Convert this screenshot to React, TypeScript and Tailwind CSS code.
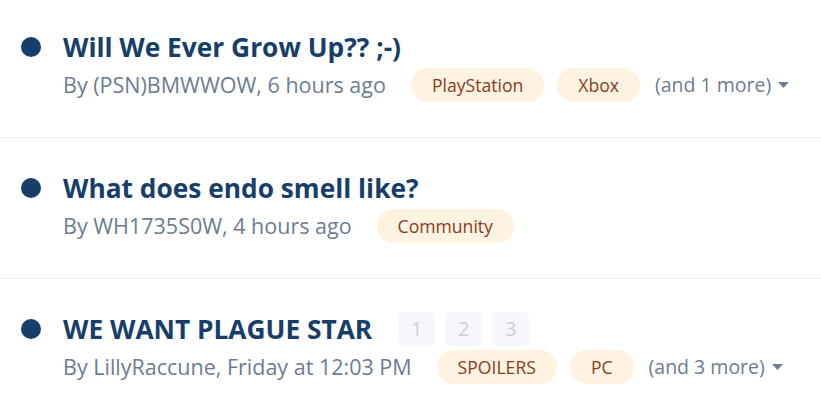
interface Thread {
  title: string;
  author: string;
  time: string;
  tags: string[];
  more?: number;
  pages?: number[];
}

const threads: Thread[] = [
  { title: "Will We Ever Grow Up?? ;-)", author: "(PSN)BMWWOW", time: "6 hours ago", tags: ["PlayStation", "Xbox"], more: 1 },
  { title: "What does endo smell like?", author: "WH1735S0W", time: "4 hours ago", tags: ["Community"] },
  { title: "WE WANT PLAGUE STAR", author: "LillyRaccune", time: "Friday at 12:03 PM", tags: ["SPOILERS", "PC"], more: 3, pages: [1, 2, 3] },
];

const Caret = () => (
  <svg width="13" height="8" viewBox="0 0 13 8" className="ml-[6px]">
    <path d="M1 1h11l-5.5 6z" fill="#6f7c8f" />
  </svg>
);

const ThreadRow = ({ t, last }: { t: Thread; last: boolean }) => (
  <div className={`flex h-[141px] pl-[21px] pt-[33px] ${last ? "" : "border-b border-[#ececec]"}`}>
    <div className="w-[20px] h-[20px] rounded-full bg-[#173e6a] mt-[7px] shrink-0" />
    <div className="ml-[22px] flex flex-col">
      <div className="flex items-center h-[34px]">
        <span className="text-[26.3px] font-bold text-[#173e6a] leading-[34px]">{t.title}</span>
        {t.pages && (
          <div className="flex gap-[10px] ml-[26px]">
            {t.pages.map((p) => (
              <span key={p} className="w-[37px] h-[34px] rounded-[6px] bg-[#f5f7fa] text-[#cbd2da] text-[20px] flex items-center justify-center">
                {p}
              </span>
            ))}
          </div>
        )}
      </div>
      <div className="flex items-center h-[34px] mt-[4px] text-[21.5px] text-[#6f7c8f]">
        <span>By {t.author}, {t.time}</span>
        <div className="flex gap-[13px] ml-[25px]">
          {t.tags.map((tag) => (
            <span key={tag} className="h-[34px] px-[21px] rounded-full bg-[#fef2e0] text-[#8b3a1c] text-[17.6px] flex items-center">
              {tag}
            </span>
          ))}
        </div>
        {t.more && (
          <span className="flex items-center ml-[15px] text-[19.5px]">
            (and {t.more} more)
            <Caret />
          </span>
        )}
      </div>
    </div>
  </div>
);

export default function App() {
  return (
    <div className="w-[821px] h-[420px] bg-white overflow-hidden" style={{ fontFamily: '"Open Sans", sans-serif' }}>
      <div className="-mt-[3px]">
        {threads.map((t, i) => (
          <ThreadRow key={t.title} t={t} last={i === threads.length - 1} />
        ))}
      </div>
    </div>
  );
}
